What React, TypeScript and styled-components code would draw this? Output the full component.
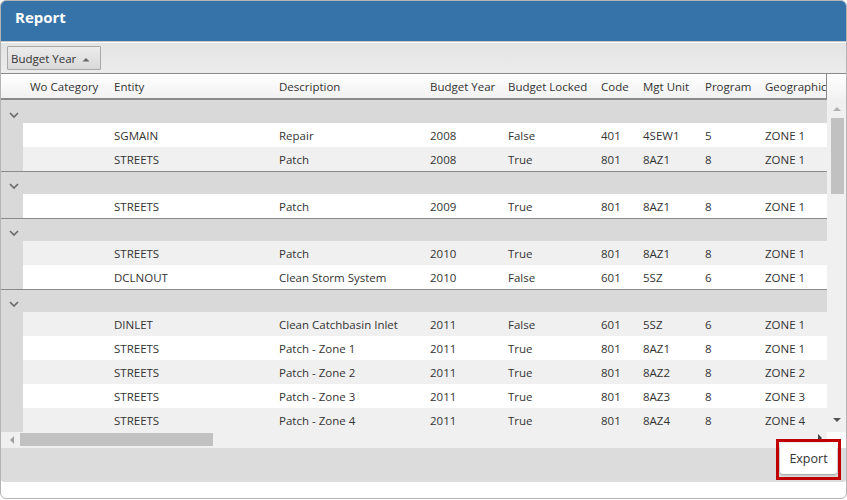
import React from "react";
import styled, { createGlobalStyle } from "styled-components";

const Global = createGlobalStyle`
  html, body { margin: 0; padding: 0; background: #ffffff; }
  body { font-family: "Open Sans", "Noto Sans", sans-serif; color: #333333; }
  * { box-sizing: border-box; }
`;

const COLS = "22px 84px 165px 151px 78px 93px 42px 62px 60px 100px";
const ROW_W = 857;

const Frame = styled.div`
  width: 847px;
  height: 499px;
  border: 1px solid #b4b4b4;
  border-radius: 6px;
  overflow: hidden;
  background: #ffffff;
  display: flex;
  flex-direction: column;
`;

const TitleBar = styled.div`
  height: 41px;
  flex: none;
  background: #3673a8;
  border-bottom: 1px solid #c9c9c9;
  padding: 5px 0 0 14px;
  color: #ffffff;
  font-weight: 700;
  font-size: 15px;
  line-height: 22px;
`;

const Toolbar = styled.div`
  margin-top: 1px;
  height: 31px;
  flex: none;
  background: linear-gradient(#e4e4e4, #ececec);
  border-bottom: 1px solid #8a8a8a;
  padding: 3px 6px 0;
  display: flex;
  align-items: flex-start;
`;

const GroupButton = styled.div`
  width: 94px;
  height: 24px;
  border: 1px solid #a9a9a9;
  border-radius: 1px;
  background: linear-gradient(#ececec, #d9d9d9);
  display: flex;
  align-items: center;
  padding-left: 3px;
  gap: 6px;
  font-size: 11.5px;
  color: #333;
`;

const GridArea = styled.div`
  flex: none;
  display: grid;
  grid-template-columns: 826px 19px;
  grid-template-rows: 26px 332px 16px;
`;

const HeaderViewport = styled.div`
  overflow: hidden;
  background: linear-gradient(#ffffff, #f1f1f1);
  border-bottom: 2px solid #8a8a8a;
  border-right: 1px solid #8a8a8a;
`;

const HeaderCorner = styled.div`
  background: linear-gradient(#ffffff, #f1f1f1);
`;

const Row = styled.div`
  width: ${ROW_W}px;
  display: grid;
  grid-template-columns: ${COLS};
`;

const HeaderCell = styled.div`
  height: 24px;
  line-height: 22px;
  padding: 2px 0 0 7px;
  white-space: nowrap;
  overflow: hidden;
  font-size: 11.5px;
  color: #333;
`;

const BodyViewport = styled.div`
  overflow: hidden;
  background: #ffffff;
`;

const GroupRow = styled.div`
  width: ${ROW_W}px;
  height: 23px;
  border-top: 1px solid #8a8a8a;
  background: #d9d9d9;
  padding: 11px 0 0 8px;
  display: flex;
  align-items: flex-start;
  &:first-child { border-top-color: #d9d9d9; }
`;

const DataRow = styled(Row)<{ $alt: boolean }>`
  height: 24px;
  background: ${(p) => (p.$alt ? "#f0f0f0" : "#ffffff")};
`;

const Gutter = styled.div`
  background: #d9d9d9;
`;

const Cell = styled.div`
  height: 24px;
  line-height: 23px;
  padding: 1px 0 0 7px;
  white-space: nowrap;
  overflow: hidden;
  font-size: 11.5px;
  color: #333;
`;

const VScroll = styled.div`
  background: #f0f0f0;
  position: relative;
  display: flex;
  flex-direction: column;
  align-items: center;
  padding-top: 6px;
`;

const VThumb = styled.div`
  width: 13px;
  height: 76px;
  margin: 6px 0 0 1px;
  background: #c1c1c1;
`;

const VDown = styled.div`
  margin-top: auto;
  margin-bottom: 9px;
  display: flex;
`;

const HScroll = styled.div`
  background: #f0f0f0;
  display: flex;
  align-items: flex-start;
  padding-top: 1px;
  position: relative;
`;

const HLeft = styled.div`
  width: 19px;
  height: 13px;
  display: flex;
  align-items: center;
  justify-content: center;
  padding-left: 3px;
`;

const HThumb = styled.div`
  width: 193px;
  height: 13px;
  background: #c1c1c1;
`;

const HRight = styled.div`
  margin-left: auto;
  margin-right: 4px;
  margin-top: 1px;
  display: flex;
`;

const Corner = styled.div`
  background: #ffffff;
`;

const Footer = styled.div`
  height: 34px;
  flex: none;
  background: #dcdcdc;
  border-radius: 0 0 3px 3px;
  position: relative;
`;

const Highlight = styled.div`
  position: absolute;
  right: 5px;
  top: -9px;
  border: 3px solid #c00000;
  padding: 0 1px 3px 1px;
  display: flex;
`;

const ExportButton = styled.button`
  width: 57px;
  height: 31px;
  border: none;
  border-radius: 3px;
  background: #ffffff;
  box-shadow: 0 1px 2px rgba(0, 0, 0, 0.3);
  font-family: "Open Sans", "Noto Sans", sans-serif;
  font-size: 12.5px;
  color: #333;
  padding: 0;
  margin-top: 1px;
`;

const Chevron = () => (
  <svg width="10" height="6" viewBox="0 0 10 6">
    <polyline points="1,1 5,5 9,1" fill="none" stroke="#6b6b6b" strokeWidth="1.7" />
  </svg>
);

const SortArrow = () => (
  <svg width="8" height="5" viewBox="0 0 8 5" style={{ marginTop: 3 }}>
    <polygon points="0.5,4.5 4,1 7.5,4.5" fill="#666666" />
  </svg>
);

const Tri = ({ dir, color }: { dir: "up" | "down" | "left" | "right"; color: string }) => {
  const pts: Record<string, string> = {
    up: "0,5 4,1 8,5",
    down: "0,1 4,5 8,1",
    left: "5,0 1,4 5,8",
    right: "1,0 5,4 1,8",
  };
  const horiz = dir === "left" || dir === "right";
  return (
    <svg width={horiz ? 6 : 8} height={horiz ? 8 : 6} viewBox={horiz ? "0 0 6 8" : "0 0 8 6"}>
      <polygon points={pts[dir]} fill={color} />
    </svg>
  );
};

type Rec = [string, string, string, string, string, string, string, string];

const groups: Rec[][] = [
  [
    ["SGMAIN", "Repair", "2008", "False", "401", "4SEW1", "5", "ZONE 1"],
    ["STREETS", "Patch", "2008", "True", "801", "8AZ1", "8", "ZONE 1"],
  ],
  [["STREETS", "Patch", "2009", "True", "801", "8AZ1", "8", "ZONE 1"]],
  [
    ["STREETS", "Patch", "2010", "True", "801", "8AZ1", "8", "ZONE 1"],
    ["DCLNOUT", "Clean Storm System", "2010", "False", "601", "5SZ", "6", "ZONE 1"],
  ],
  [
    ["DINLET", "Clean Catchbasin Inlet", "2011", "False", "601", "5SZ", "6", "ZONE 1"],
    ["STREETS", "Patch - Zone 1", "2011", "True", "801", "8AZ1", "8", "ZONE 1"],
    ["STREETS", "Patch - Zone 2", "2011", "True", "801", "8AZ2", "8", "ZONE 2"],
    ["STREETS", "Patch - Zone 3", "2011", "True", "801", "8AZ3", "8", "ZONE 3"],
    ["STREETS", "Patch - Zone 4", "2011", "True", "801", "8AZ4", "8", "ZONE 4"],
  ],
];

const headers = [
  "Wo Category",
  "Entity",
  "Description",
  "Budget Year",
  "Budget Locked",
  "Code",
  "Mgt Unit",
  "Program",
  "Geographic Area",
];

export default function App() {
  let idx = 0;
  return (
    <>
      <Global />
      <Frame>
        <TitleBar>Report</TitleBar>
        <Toolbar>
          <GroupButton>
            Budget Year
            <SortArrow />
          </GroupButton>
        </Toolbar>
        <GridArea>
          <HeaderViewport>
            <Row>
              <div />
              {headers.map((h) => (
                <HeaderCell key={h}>{h}</HeaderCell>
              ))}
            </Row>
          </HeaderViewport>
          <HeaderCorner />
          <BodyViewport>
            {groups.map((g, gi) => (
              <React.Fragment key={gi}>
                <GroupRow>
                  <Chevron />
                </GroupRow>
                {g.map((r) => {
                  const alt = idx % 2 === 1;
                  idx += 1;
                  return (
                    <DataRow key={idx} $alt={alt}>
                      <Gutter />
                      <Cell />
                      {r.map((v, ci) => (
                        <Cell key={ci}>{v}</Cell>
                      ))}
                    </DataRow>
                  );
                })}
              </React.Fragment>
            ))}
          </BodyViewport>
          <VScroll>
            <Tri dir="up" color="#b0b0b0" />
            <VThumb />
            <VDown>
              <Tri dir="down" color="#555555" />
            </VDown>
          </VScroll>
          <HScroll>
            <HLeft>
              <Tri dir="left" color="#a0a0a0" />
            </HLeft>
            <HThumb />
            <HRight>
              <Tri dir="right" color="#444444" />
            </HRight>
          </HScroll>
          <Corner />
        </GridArea>
        <Footer>
          <Highlight>
            <ExportButton>Export</ExportButton>
          </Highlight>
        </Footer>
      </Frame>
    </>
  );
}
